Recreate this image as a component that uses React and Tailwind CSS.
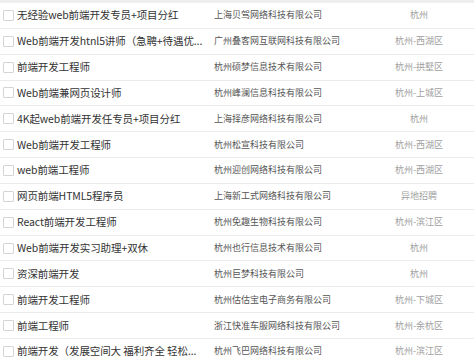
const jobs = [
  ["无经验web前端开发专员+项目分红", "上海贝驾网络科技有限公司", "杭州"],
  ["Web前端开发htnl5讲师（急聘+待遇优...", "广州叠客网互联网科技有限公司", "杭州-西湖区"],
  ["前端开发工程师", "杭州硕梦信息技术有限公司", "杭州-拱墅区"],
  ["Web前端兼网页设计师", "杭州峰澜信息科技有限公司", "杭州-上城区"],
  ["4K起web前端开发任专员+项目分红", "上海择彦网络科技有限公司", "杭州"],
  ["Web前端开发工程师", "杭州松宣科技有限公司", "杭州-西湖区"],
  ["web前端工程师", "杭州迎创网络科技有限公司", "杭州-西湖区"],
  ["网页前端HTML5程序员", "上海新工式网络科技有限公司", "异地招聘"],
  ["React前端开发工程师", "杭州免趣生物科技有限公司", "杭州-滨江区"],
  ["Web前端开发实习助理+双休", "杭州也行信息技术有限公司", "杭州"],
  ["资深前端开发", "杭州巨梦科技有限公司", "杭州"],
  ["前端开发工程师", "杭州估估宝电子商务有限公司", "杭州-下城区"],
  ["前端工程师", "浙江快准车服网络科技有限公司", "杭州-余杭区"],
  ["前端开发（发展空间大 福利齐全 轻松...", "杭州飞巴网络科技有限公司", "杭州-滨江区"],
];

export default function App() {
  return (
    <div className="w-[474px] h-[362px] overflow-hidden bg-white font-['Noto_Sans_CJK_SC','Microsoft_YaHei',sans-serif]">
      <div className="h-[3px] bg-[#eeeeee]" />
      {jobs.map(([title, company, city], i) => (
        <div key={i} className="flex items-center h-[25.85px] border-b border-[#ebebeb]">
          <span className="ml-[3px] w-[11px] h-[11px] shrink-0 border border-[#d4d4d4] bg-white rounded-[1px]" />
          <span className="ml-[3px] w-[197px] shrink-0 whitespace-nowrap text-[10.5px] text-[#333333] leading-[14px] tracking-[-0.1px]">
            {title}
          </span>
          <span className="w-[150px] shrink-0 whitespace-nowrap text-[9px] text-[#555555] leading-[12px]">
            {company}
          </span>
          <span className="flex-1 text-center whitespace-nowrap text-[9px] text-[#a0a0a0] leading-[12px]">
            {city}
          </span>
        </div>
      ))}
    </div>
  );
}
